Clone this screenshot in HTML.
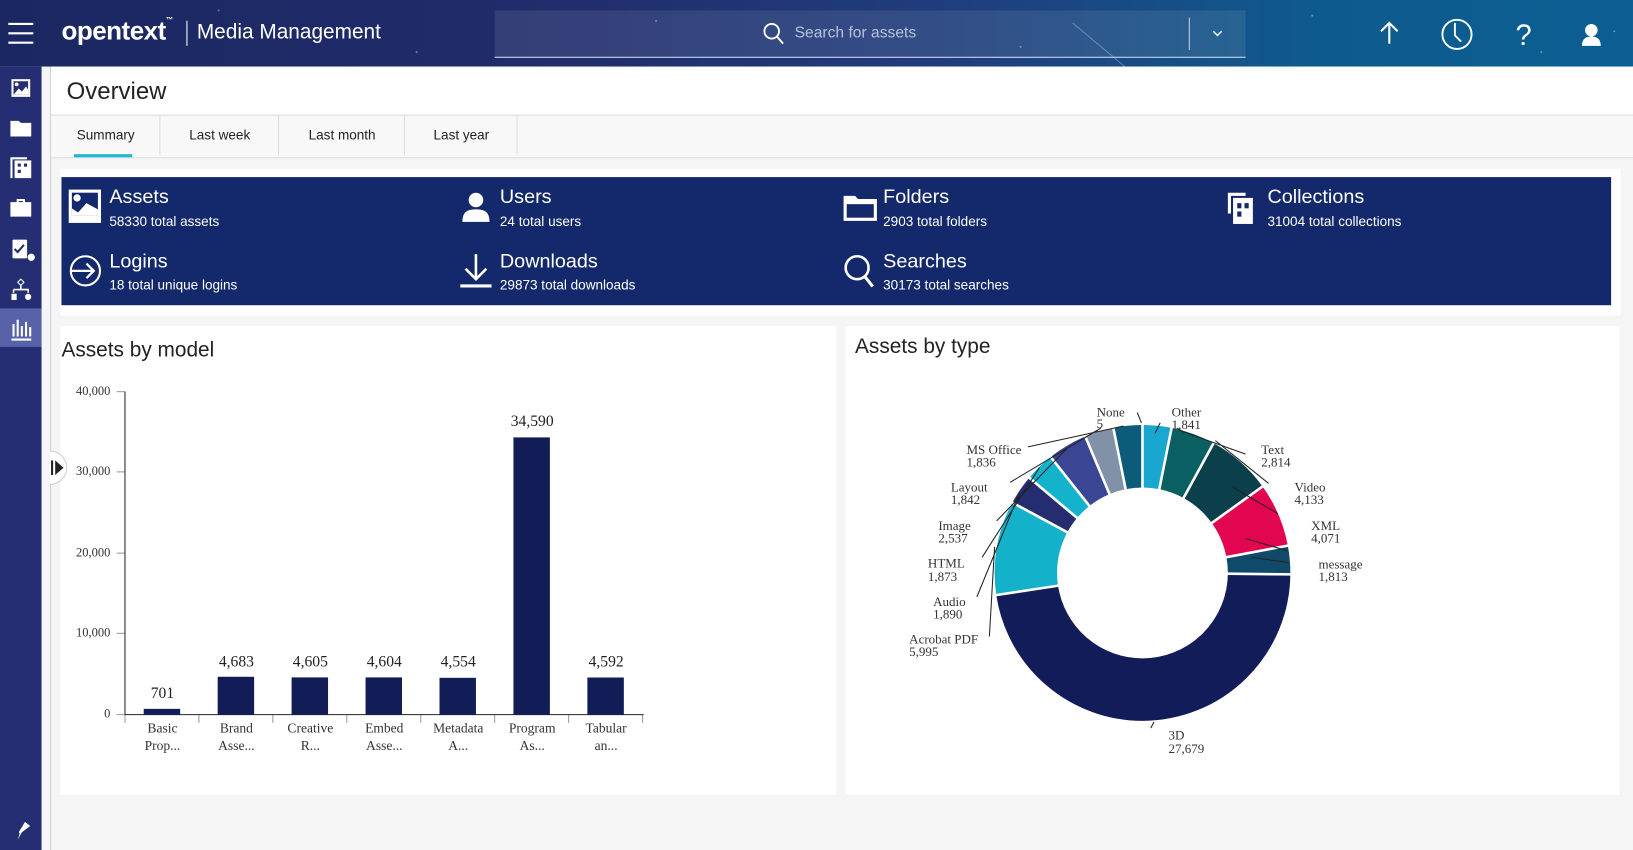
<!DOCTYPE html>
<html><head><meta charset="utf-8">
<style>
*{margin:0;padding:0;box-sizing:border-box}
html,body{width:1633px;height:850px;overflow:hidden;background:#f5f5f5;font-family:"Liberation Sans",sans-serif}
#s{position:absolute;left:0;top:0;width:1568px;height:816px;transform:scale(1.04145,1.04167);transform-origin:0 0;background:#f5f5f5}
.a{position:absolute}
.hdr{left:0;top:0;width:1568px;height:64px;background:linear-gradient(90deg,#1b2761 0%,#212d6c 35%,#1f3f7e 60%,#0f5a8c 80%,#0b5f93 100%)}
.sb{left:0;top:64px;width:40px;height:752px;background:#252e72}
.st{color:#fff;font-size:19px}
.ss{color:#fff;font-size:13px}
.tab{position:absolute;top:110px;height:39px;font-size:13px;color:#222;display:flex;align-items:center;justify-content:center;border-right:1px solid #ddd}
.yl{position:absolute;font-family:"Liberation Serif",serif;font-size:12px;color:#333;text-align:right;width:50px}
.bl{font-family:"Liberation Serif",serif;font-size:15px;fill:#222;text-anchor:middle}
.xl{font-family:"Liberation Serif",serif;font-size:13px;fill:#333;text-anchor:middle}
.dl{font-family:"Liberation Serif",serif;font-size:12.5px;fill:#333}
</style></head><body><div id="s">
<div class="a hdr"></div>
<svg class="a" style="left:0;top:0" width="1568" height="64">
<g fill="#fff" opacity=".35"><circle cx="210" cy="10" r="1"/><circle cx="400" cy="50" r="1"/><circle cx="630" cy="20" r="1"/><circle cx="980" cy="45" r="1"/><circle cx="1260" cy="15" r="1"/><circle cx="1480" cy="50" r="1"/><circle cx="1550" cy="30" r="1"/><circle cx="330" cy="28" r="1"/></g>
<line x1="1030" y1="22" x2="1080" y2="64" stroke="#8fb8d8" stroke-width="1" opacity=".5"/>
<g stroke="#fff" stroke-width="2"><line x1="8" y1="23" x2="32" y2="23"/><line x1="8" y1="32" x2="32" y2="32"/><line x1="8" y1="41" x2="32" y2="41"/></g>
<rect x="475" y="10" width="721" height="45" fill="#fff" opacity=".09"/>
<line x1="475" y1="55" x2="1196" y2="55" stroke="#c8d2e4" stroke-width="1"/>
<circle cx="741" cy="30" r="7" fill="none" stroke="#fff" stroke-width="1.8"/><line x1="746" y1="35" x2="752" y2="42" stroke="#fff" stroke-width="1.8"/>
<line x1="1142" y1="17" x2="1142" y2="48" stroke="#ccd" stroke-width="1"/>
<path d="M1165 30l4 4 4-4" fill="none" stroke="#fff" stroke-width="1.4"/>
<path d="M1334 42V22M1326 30l8-8 8 8" fill="none" stroke="#fff" stroke-width="2"/>
<circle cx="1399" cy="33" r="14" fill="none" stroke="#fff" stroke-width="1.8"/><path d="M1397 22v12l6 6" fill="none" stroke="#fff" stroke-width="1.8"/>
<text x="1463" y="43" fill="#fff" font-size="28" text-anchor="middle" font-family="Liberation Sans">?</text>
<circle cx="1528" cy="29" r="6" fill="#fff"/><path d="M1519 44c0-7 4-9 9-9s9 2 9 9z" fill="#fff"/>
</svg>
<div class="a" style="left:59px;top:16px;color:#fff;font-size:25px;font-weight:bold;letter-spacing:-0.5px">opentext<span style="font-size:7px;vertical-align:top">™</span></div>
<div class="a" style="left:179px;top:20px;width:1px;height:24px;background:#fff"></div>
<div class="a" style="left:189px;top:20px;color:#fff;font-size:20px">Media Management</div>
<div class="a" style="left:763px;top:23px;color:#b7c3dd;font-size:15px">Search for assets</div>

<div class="a sb"></div>
<div class="a" style="left:0;top:296px;width:40px;height:37px;background:#5762a9"></div>
<svg class="a" style="left:0;top:64px" width="40" height="752" fill="#fff">
<rect x="11" y="12" width="18" height="17" fill="#fff"/><rect x="13" y="14" width="14" height="13" fill="#252e72"/><path d="M13 27l5-6 3 3 4-5 2 3v5z"/><circle cx="16" cy="17" r="1.8"/>
<path d="M10 52h8l2 2h10v13H10z"/>
<rect x="14" y="90" width="16" height="17"/><path d="M10 87h2v20h-2zM10 87h16v2H10z"/><rect x="17" y="93" width="3" height="3" fill="#252e72"/><rect x="23" y="93" width="3" height="3" fill="#252e72"/><rect x="17" y="99" width="3" height="3" fill="#252e72"/>
<path d="M10 130h20v14H10z"/><path d="M16 127h8v4h-2v-2h-4v2h-2z"/>
<rect x="12" y="166" width="14" height="18" rx="1"/><path d="M14 175l3 3 6-7" stroke="#252e72" stroke-width="2" fill="none"/><circle cx="30" cy="183" r="3.5"/>
<path d="M20 204l3 3-3 3-3-3z" fill="none" stroke="#fff"/><path d="M20 210v4M13 214h14v3M13 214v3" stroke="#fff" fill="none" stroke-width="1.5"/><rect x="11" y="218" width="5" height="6"/><circle cx="27" cy="221" r="3"/>
<path d="M12 247h2v12h-2zM16 243h2v16h-2zM20 249h2v10h-2zM24 245h2v14h-2zM28 250h2v9h-2zM11 261h19v2H11z"/>
<path d="M18 735l6-10 5 4-8 6-4 7 2-6z"/>
</svg>

<div class="a" style="left:40px;top:64px;width:1528px;height:752px;background:#f5f5f5"></div>
<div class="a" style="left:48px;top:64px;width:1px;height:752px;background:#cfd3dc"></div>
<div class="a" style="left:49px;top:64px;width:1519px;height:47px;background:#fff;border-bottom:1px solid #ddd"></div>
<div class="a" style="left:64px;top:74px;font-size:23px;color:#222">Overview</div>
<div class="a" style="left:49px;top:112px;width:1519px;height:40px;background:#f8f8f8;border-bottom:1px solid #ddd"></div>
<div class="tab" style="left:50px;width:104px">Summary</div>
<div class="a" style="left:71px;top:148px;width:56px;height:3px;background:#1fb6d3"></div>
<div class="tab" style="left:155px;width:113px">Last week</div>
<div class="tab" style="left:269px;width:120px">Last month</div>
<div class="tab" style="left:390px;width:107px">Last year</div>

<div class="a" style="left:58px;top:162px;width:1498px;height:141px;background:#fff"></div>
<div class="a" style="left:59px;top:170px;width:1488px;height:123px;background:#14296b"></div>
<svg class="a" style="left:59px;top:170px" width="1488" height="123" fill="#fff">
<rect x="7" y="12" width="31" height="32"/><rect x="10" y="15" width="25" height="22" fill="#14296b"/><path d="M10 37V30l6 4 8-9 11 6v6z"/><circle cx="15" cy="20" r="3.5"/>
<circle cx="398" cy="22" r="7"/><path d="M385 43c0-10 5-12 13-12s13 2 13 12z"/>
<path d="M751 18h11l3 3h18v21h-32z"/><rect x="754" y="26" width="26" height="13" fill="#14296b"/>
<path d="M1120 15h17v3h-14v17h-3z"/><rect x="1125" y="20" width="19" height="25"/><rect x="1129" y="25" width="4" height="5" fill="#14296b"/><rect x="1136" y="25" width="4" height="5" fill="#14296b"/><rect x="1129" y="33" width="4" height="5" fill="#14296b"/>
<circle cx="23" cy="90" r="14" fill="none" stroke="#fff" stroke-width="2"/><path d="M9 90h22M24 83l7 7-7 7" fill="none" stroke="#fff" stroke-width="2.2"/>
<path d="M398 74v24M388 88l10 10 10-10" fill="none" stroke="#fff" stroke-width="2.5"/><rect x="383" y="103" width="30" height="3"/>
<circle cx="764" cy="87" r="11" fill="none" stroke="#fff" stroke-width="2.5"/><path d="M771 95l8 10" stroke="#fff" stroke-width="3"/>
</svg>
<div class="a st" style="left:105px;top:179px">Assets</div><div class="a ss" style="left:105px;top:205px">58330 total assets</div>
<div class="a st" style="left:480px;top:179px">Users</div><div class="a ss" style="left:480px;top:205px">24 total users</div>
<div class="a st" style="left:848px;top:179px">Folders</div><div class="a ss" style="left:848px;top:205px">2903 total folders</div>
<div class="a st" style="left:1217px;top:179px">Collections</div><div class="a ss" style="left:1217px;top:205px">31004 total collections</div>
<div class="a st" style="left:105px;top:241px">Logins</div><div class="a ss" style="left:105px;top:266px">18 total unique logins</div>
<div class="a st" style="left:480px;top:241px">Downloads</div><div class="a ss" style="left:480px;top:266px">29873 total downloads</div>
<div class="a st" style="left:848px;top:241px">Searches</div><div class="a ss" style="left:848px;top:266px">30173 total searches</div>

<div class="a" style="left:58px;top:313px;width:745px;height:450px;background:#fff"></div>
<div class="a" style="left:812px;top:313px;width:743px;height:450px;background:#fff"></div>
<div class="a" style="left:59px;top:325px;font-size:20px;color:#222">Assets by model</div>
<div class="a" style="left:821px;top:322px;font-size:20px;color:#222">Assets by type</div>

<div class="yl" style="left:56px;top:368px">40,000</div>
<div class="yl" style="left:56px;top:445px">30,000</div>
<div class="yl" style="left:56px;top:523px">20,000</div>
<div class="yl" style="left:56px;top:600px">10,000</div>
<div class="yl" style="left:56px;top:678px">0</div>
<svg class="a" style="left:0;top:0" width="810" height="770">
<g stroke="#999" stroke-width="1"><line x1="112" y1="376" x2="120" y2="376"/><line x1="112" y1="453" x2="120" y2="453"/><line x1="112" y1="531" x2="120" y2="531"/><line x1="112" y1="608" x2="120" y2="608"/><line x1="112" y1="686" x2="120" y2="686"/>
<line x1="120" y1="686" x2="120" y2="694"/><line x1="191" y1="686" x2="191" y2="694"/><line x1="262" y1="686" x2="262" y2="694"/><line x1="333" y1="686" x2="333" y2="694"/><line x1="404" y1="686" x2="404" y2="694"/><line x1="475" y1="686" x2="475" y2="694"/><line x1="546" y1="686" x2="546" y2="694"/><line x1="617" y1="686" x2="617" y2="694"/></g>
<line x1="120" y1="376" x2="120" y2="686" stroke="#222"/><line x1="120" y1="686" x2="618" y2="686" stroke="#222"/>
<g fill="#121c56"><rect x="138" y="680.5" width="35" height="5.5"/><rect x="209" y="649.7" width="35" height="36.3"/><rect x="280" y="650.3" width="35" height="35.7"/><rect x="351" y="650.3" width="35" height="35.7"/><rect x="422" y="650.7" width="35" height="35.3"/><rect x="493" y="419.9" width="35" height="266.1"/><rect x="564" y="650.4" width="35" height="35.6"/></g>
<text class="bl" x="156" y="670">701</text><text class="bl" x="227" y="640">4,683</text><text class="bl" x="298" y="640">4,605</text><text class="bl" x="369" y="640">4,604</text><text class="bl" x="440" y="640">4,554</text><text class="bl" x="511" y="409">34,590</text><text class="bl" x="582" y="640">4,592</text>
<g class="xl"><text x="156" y="703">Basic</text><text x="156" y="720">Prop...</text><text x="227" y="703">Brand</text><text x="227" y="720">Asse...</text><text x="298" y="703">Creative</text><text x="298" y="720">R...</text><text x="369" y="703">Embed</text><text x="369" y="720">Asse...</text><text x="440" y="703">Metadata</text><text x="440" y="720">A...</text><text x="511" y="703">Program</text><text x="511" y="720">As...</text><text x="582" y="703">Tabular</text><text x="582" y="720">an...</text></g>
<path d="M48 433a16 16 0 0 1 0 32" fill="#fff" stroke="#ccd" stroke-width="1"/>
<rect x="49" y="442" width="2" height="14" fill="#222"/><path d="M53 442l8 7-8 7z" fill="#222"/>
</svg>

<svg class="a" style="left:812px;top:313px" width="743" height="450">
<g transform="translate(285,237)">
<g transform="rotate(-90)" fill="none" stroke-width="60">
<circle r="112" pathLength="360" stroke="#1aa7cf" stroke-dasharray="11.36 400" stroke-dashoffset="0"/>
<circle r="112" pathLength="360" stroke="#0a5f63" stroke-dasharray="17.37 400" stroke-dashoffset="-11.36"/>
<circle r="112" pathLength="360" stroke="#0b3f4c" stroke-dasharray="25.51 400" stroke-dashoffset="-28.73"/>
<circle r="112" pathLength="360" stroke="#e2054f" stroke-dasharray="25.13 400" stroke-dashoffset="-54.24"/>
<circle r="112" pathLength="360" stroke="#0f4a6a" stroke-dasharray="11.19 400" stroke-dashoffset="-79.37"/>
<circle r="112" pathLength="360" stroke="#121c58" stroke-dasharray="170.83 400" stroke-dashoffset="-90.56"/>
<circle r="112" pathLength="360" stroke="#14b1cb" stroke-dasharray="37 400" stroke-dashoffset="-261.39"/>
<circle r="112" pathLength="360" stroke="#252d70" stroke-dasharray="11.66 400" stroke-dashoffset="-298.39"/>
<circle r="112" pathLength="360" stroke="#14b3cc" stroke-dasharray="11.56 400" stroke-dashoffset="-310.05"/>
<circle r="112" pathLength="360" stroke="#3a4593" stroke-dasharray="15.66 400" stroke-dashoffset="-321.61"/>
<circle r="112" pathLength="360" stroke="#8192a8" stroke-dasharray="11.37 400" stroke-dashoffset="-337.27"/>
<circle r="112" pathLength="360" stroke="#0c5b79" stroke-dasharray="11.36 400" stroke-dashoffset="-348.64"/>
</g>
<g stroke="#fff" stroke-width="2.5">
<line y1="-80" y2="-144"/><line y1="-80" y2="-144" transform="rotate(11.36)"/><line y1="-80" y2="-144" transform="rotate(28.73)"/><line y1="-80" y2="-144" transform="rotate(54.24)"/><line y1="-80" y2="-144" transform="rotate(79.37)"/><line y1="-80" y2="-144" transform="rotate(90.56)"/><line y1="-80" y2="-144" transform="rotate(261.39)"/><line y1="-80" y2="-144" transform="rotate(298.39)"/><line y1="-80" y2="-144" transform="rotate(310.05)"/><line y1="-80" y2="-144" transform="rotate(321.61)"/><line y1="-80" y2="-144" transform="rotate(337.27)"/><line y1="-80" y2="-144" transform="rotate(348.64)"/>
</g>
</g>
<g stroke="#222" stroke-width="1" fill="none">
<path d="M302 93l-5 10"/><path d="M280 83l4 10"/><path d="M318 98l5 3 61 22"/><path d="M355 110l51 41"/><path d="M372 155l43 25"/><path d="M384 204l41 12"/><path d="M390 222l35 5"/>
<path d="M296 380l-3 6"/>
<path d="M175 116l92-20"/><path d="M158 150l87-52"/><path d="M145 187l68-70"/><path d="M131 222l55-86"/><path d="M126 260l41-100"/><path d="M138 298l5-86"/>
</g>
<g class="dl">
<text x="241" y="87">None</text><text x="241" y="98">5</text>
<text x="313" y="87">Other</text><text x="313" y="99">1,841</text>
<text x="399" y="123">Text</text><text x="399" y="135">2,814</text>
<text x="431" y="159">Video</text><text x="431" y="171">4,133</text>
<text x="447" y="196">XML</text><text x="447" y="208">4,071</text>
<text x="454" y="233">message</text><text x="454" y="245">1,813</text>
<text x="310" y="397">3D</text><text x="310" y="410">27,679</text>
<text x="116" y="123">MS Office</text><text x="116" y="135">1,836</text>
<text x="101" y="159">Layout</text><text x="101" y="171">1,842</text>
<text x="89" y="196">Image</text><text x="89" y="208">2,537</text>
<text x="79" y="232">HTML</text><text x="79" y="245">1,873</text>
<text x="84" y="269">Audio</text><text x="84" y="281">1,890</text>
<text x="61" y="305">Acrobat PDF</text><text x="61" y="317">5,995</text>
</g>
</svg>
</div></body></html>
